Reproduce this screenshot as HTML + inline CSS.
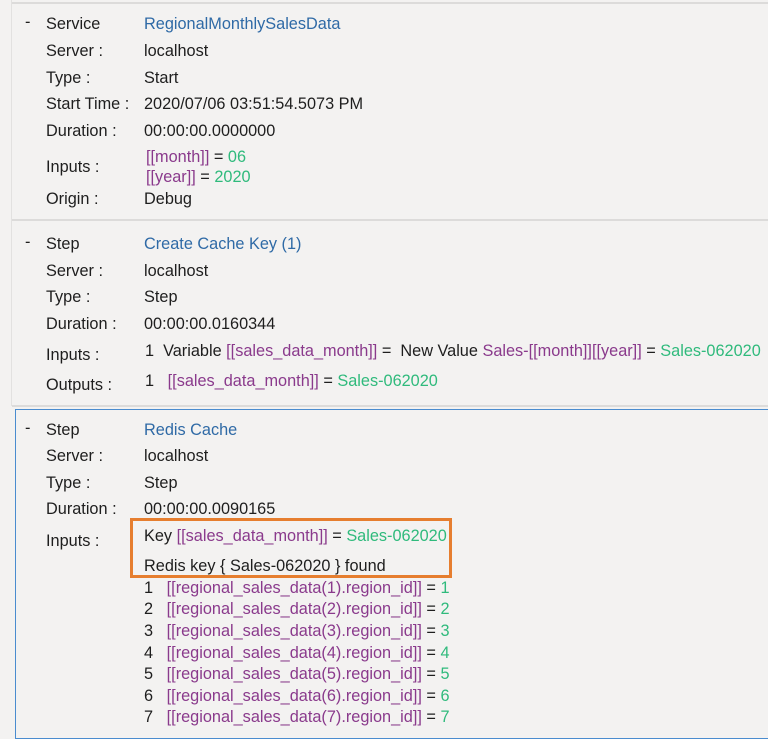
<!DOCTYPE html>
<html><head><meta charset="utf-8"><style>
body{margin:0;width:768px;height:730px;background:#f3f2f1;font-family:"Liberation Sans",sans-serif;font-size:16.3px;color:#1e1e1e;position:relative;overflow:hidden}
.a{position:absolute;white-space:nowrap;line-height:20px}
.b{color:#2f6aa6}.p{color:#8a3a8c}.g{color:#2fba7c}
.hl{position:absolute;left:12px;right:0;height:2px;background:#dcdbda}
.vl{position:absolute;left:11px;width:1px;background:#e2e1e0}
</style></head><body>
<div class="vl" style="top:0;height:406px"></div>
<div class="hl" style="top:2px"></div>
<div class="hl" style="top:219px"></div>
<div class="hl" style="top:405px"></div>
<div style="position:absolute;left:15px;top:409px;right:-2px;height:330px;border:1.5px solid #4a8ccf;box-sizing:border-box"></div>
<div style="position:absolute;left:130px;top:518px;width:322px;height:60px;border:3px solid #e67e2f;box-sizing:border-box"></div>

<div class="a" style="left:25px;top:12px">-</div>
<div class="a" style="left:46px;top:14px">Service</div><div class="a b" style="left:144px;top:14px">RegionalMonthlySalesData</div>
<div class="a" style="left:46px;top:41px">Server :</div><div class="a" style="left:144px;top:41px">localhost</div>
<div class="a" style="left:46px;top:68px">Type :</div><div class="a" style="left:144px;top:68px">Start</div>
<div class="a" style="left:46px;top:94px">Start Time :</div><div class="a" style="left:144px;top:94px">2020/07/06 03:51:54.5073 PM</div>
<div class="a" style="left:46px;top:121px">Duration :</div><div class="a" style="left:144px;top:121px">00:00:00.0000000</div>
<div class="a" style="left:46px;top:157px">Inputs :</div>
<div class="a" style="left:146px;top:147px"><span class="p">[[month]]</span> = <span class="g">06</span></div>
<div class="a" style="left:146px;top:167px"><span class="p">[[year]]</span> = <span class="g">2020</span></div>
<div class="a" style="left:46px;top:189px">Origin :</div><div class="a" style="left:144px;top:189px">Debug</div>

<div class="a" style="left:25px;top:232px">-</div>
<div class="a" style="left:46px;top:234px">Step</div><div class="a b" style="left:144px;top:234px">Create Cache Key (1)</div>
<div class="a" style="left:46px;top:261px">Server :</div><div class="a" style="left:144px;top:261px">localhost</div>
<div class="a" style="left:46px;top:287px">Type :</div><div class="a" style="left:144px;top:287px">Step</div>
<div class="a" style="left:46px;top:314px">Duration :</div><div class="a" style="left:144px;top:314px">00:00:00.0160344</div>
<div class="a" style="left:46px;top:345px">Inputs :</div>
<div class="a" style="left:145px;top:341px">1&nbsp; Variable <span class="p">[[sales_data_month]]</span> =&nbsp; New Value <span class="p">Sales-[[month]][[year]]</span> = <span class="g">Sales-062020</span></div>
<div class="a" style="left:46px;top:375px">Outputs :</div>
<div class="a" style="left:145px;top:371px">1&nbsp;&nbsp; <span class="p">[[sales_data_month]]</span> = <span class="g">Sales-062020</span></div>

<div class="a" style="left:25px;top:418px">-</div>
<div class="a" style="left:46px;top:420px">Step</div><div class="a b" style="left:144px;top:420px">Redis Cache</div>
<div class="a" style="left:46px;top:446px">Server :</div><div class="a" style="left:144px;top:446px">localhost</div>
<div class="a" style="left:46px;top:473px">Type :</div><div class="a" style="left:144px;top:473px">Step</div>
<div class="a" style="left:46px;top:499px">Duration :</div><div class="a" style="left:144px;top:499px">00:00:00.0090165</div>
<div class="a" style="left:46px;top:531px">Inputs :</div>
<div class="a" style="left:144px;top:526px">Key <span class="p">[[sales_data_month]]</span> = <span class="g">Sales-062020</span></div>
<div class="a" style="left:144px;top:556px">Redis key { Sales-062020 } found</div>
<div class="a" style="left:144px;top:578px">1&nbsp;&nbsp; <span class="p">[[regional_sales_data(1).region_id]]</span> = <span class="g">1</span></div>
<div class="a" style="left:144px;top:599px">2&nbsp;&nbsp; <span class="p">[[regional_sales_data(2).region_id]]</span> = <span class="g">2</span></div>
<div class="a" style="left:144px;top:621px">3&nbsp;&nbsp; <span class="p">[[regional_sales_data(3).region_id]]</span> = <span class="g">3</span></div>
<div class="a" style="left:144px;top:643px">4&nbsp;&nbsp; <span class="p">[[regional_sales_data(4).region_id]]</span> = <span class="g">4</span></div>
<div class="a" style="left:144px;top:664px">5&nbsp;&nbsp; <span class="p">[[regional_sales_data(5).region_id]]</span> = <span class="g">5</span></div>
<div class="a" style="left:144px;top:686px">6&nbsp;&nbsp; <span class="p">[[regional_sales_data(6).region_id]]</span> = <span class="g">6</span></div>
<div class="a" style="left:144px;top:707px">7&nbsp;&nbsp; <span class="p">[[regional_sales_data(7).region_id]]</span> = <span class="g">7</span></div>
</body></html>
